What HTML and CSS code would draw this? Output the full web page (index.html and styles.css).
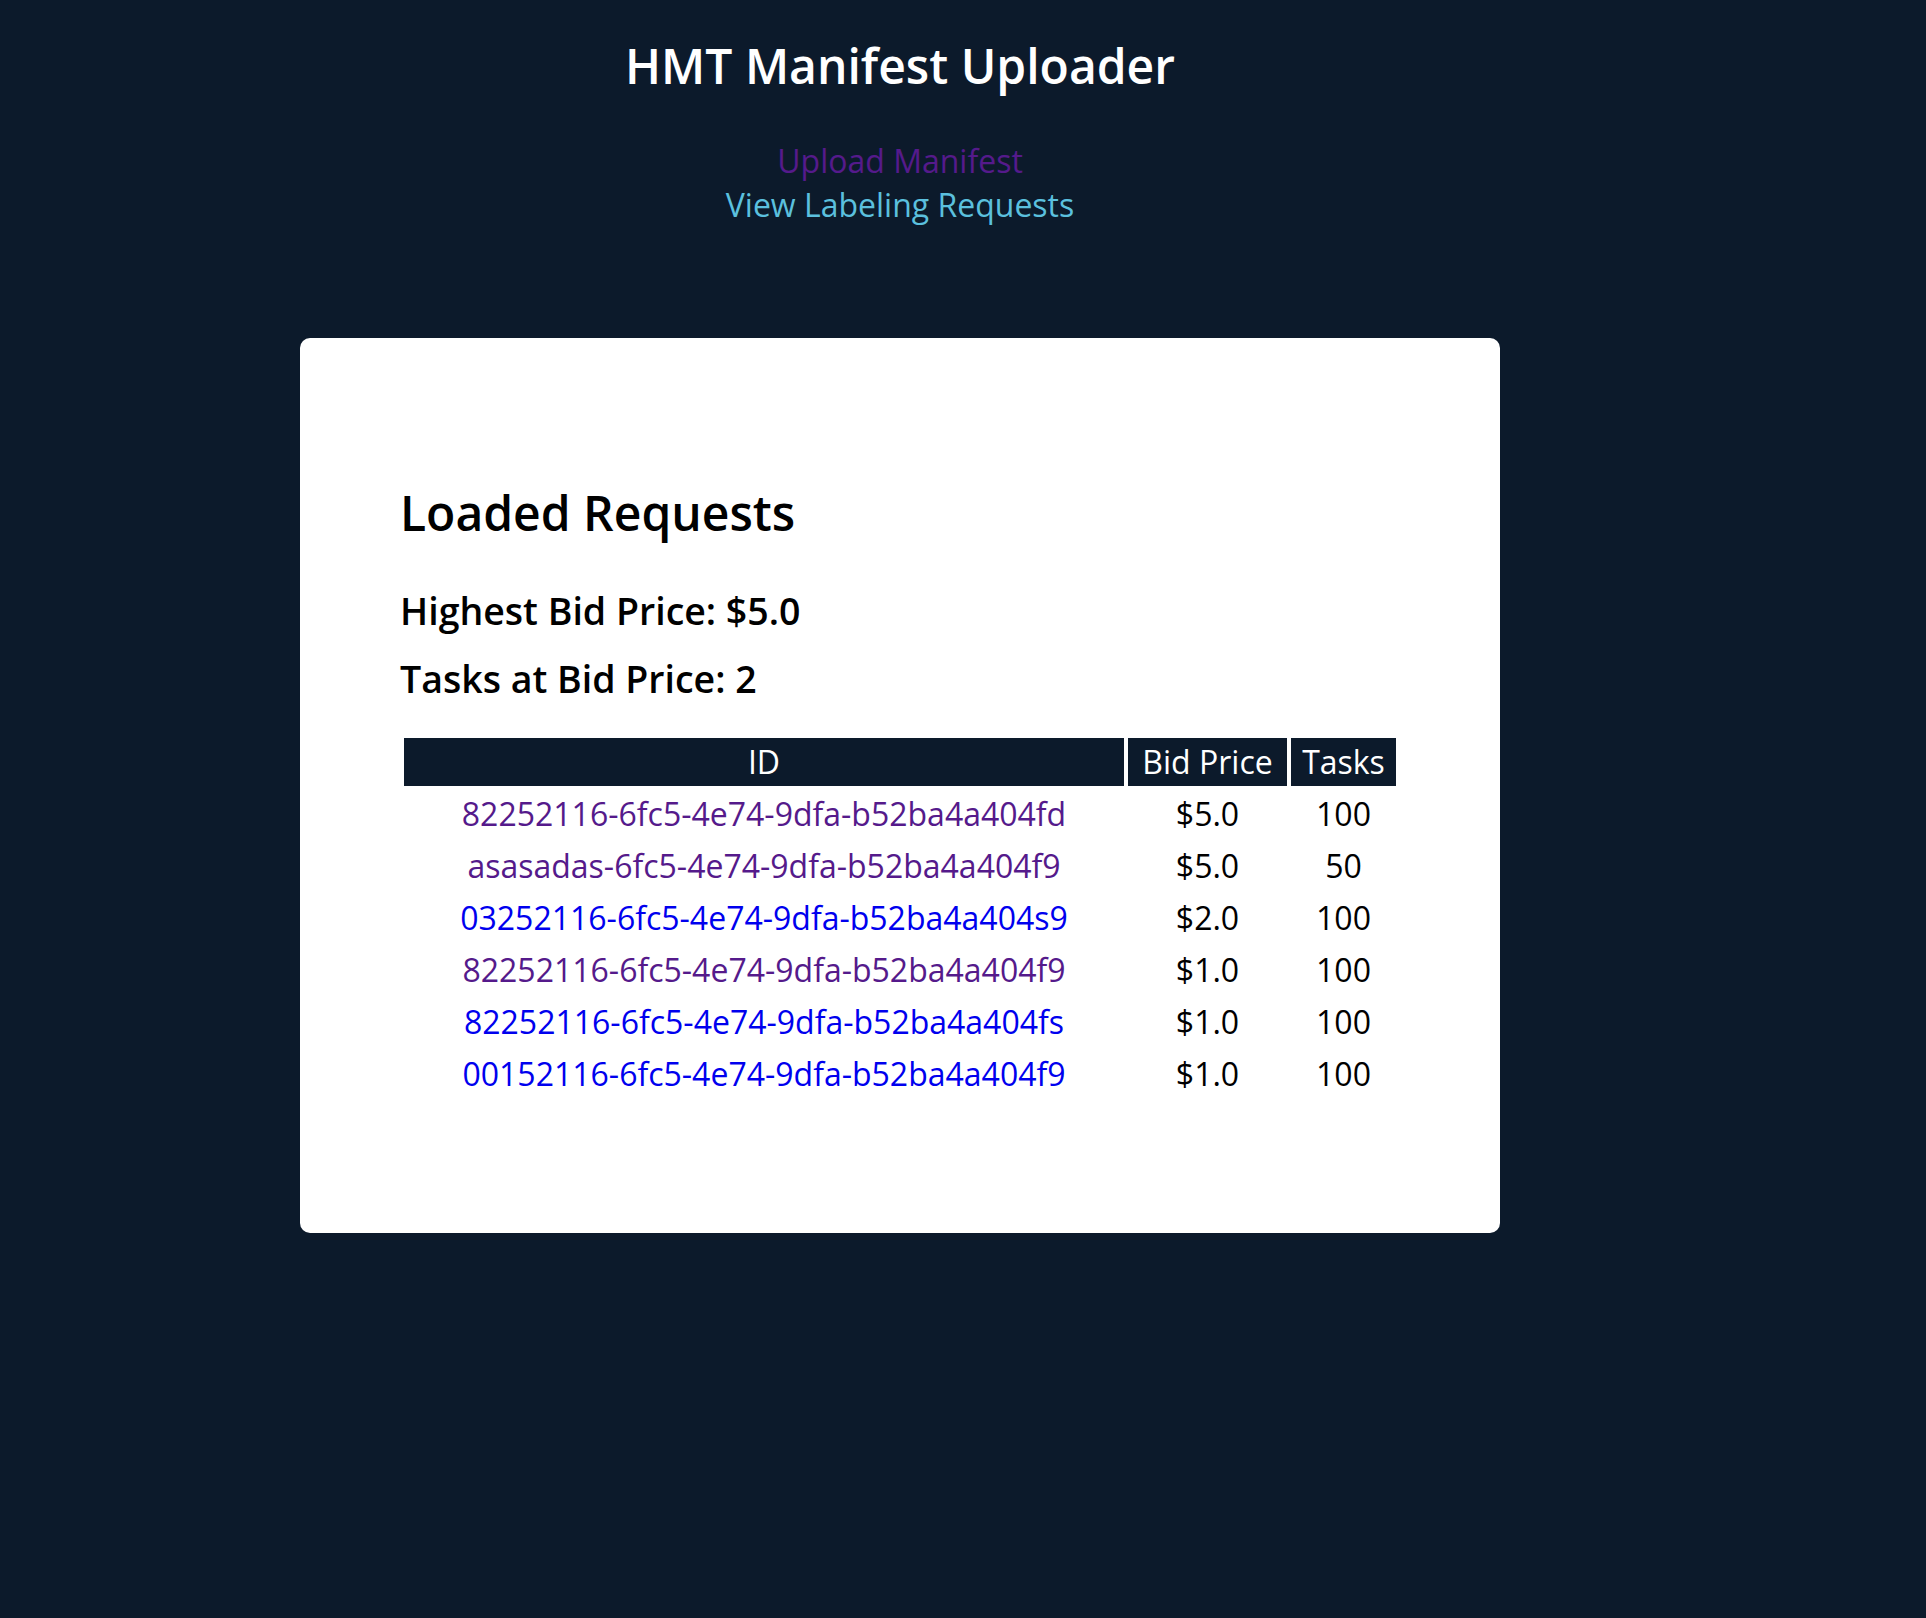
FILE: index.html
```html
<!DOCTYPE html>
<html lang="en">
<head>
    <meta charset="UTF-8">
    <meta name="viewport" content="width=device-width, initial-scale=1.0">
    <title>HMT Manifest Uploader</title>
    <link rel="stylesheet" href="styles.css">
</head>
<body>

    <div class="container">
        <h1 class="title">HMT Manifest Uploader</h1>

        <nav class="nav">
            <a href="#upload" class="nav-link visited">Upload Manifest</a>
            <a href="#requests" class="nav-link info">View Labeling Requests</a>
        </nav>

        <div class="card">
            <h2>Loaded Requests</h2>
            <h3>Highest Bid Price: $5.0</h3>
            <h3 class="second">Tasks at Bid Price: 2</h3>

            <table class="requests">
                <thead>
                    <tr>
                        <th>ID</th>
                        <th class="col-price">Bid Price</th>
                        <th class="col-tasks">Tasks</th>
                    </tr>
                </thead>
                <tbody>
                    <tr>
                        <td><a href="#" class="visited">82252116-6fc5-4e74-9dfa-b52ba4a404fd</a></td>
                        <td>$5.0</td>
                        <td>100</td>
                    </tr>
                    <tr>
                        <td><a href="#" class="visited">asasadas-6fc5-4e74-9dfa-b52ba4a404f9</a></td>
                        <td>$5.0</td>
                        <td>50</td>
                    </tr>
                    <tr>
                        <td><a href="#">03252116-6fc5-4e74-9dfa-b52ba4a404s9</a></td>
                        <td>$2.0</td>
                        <td>100</td>
                    </tr>
                    <tr>
                        <td><a href="#" class="visited">82252116-6fc5-4e74-9dfa-b52ba4a404f9</a></td>
                        <td>$1.0</td>
                        <td>100</td>
                    </tr>
                    <tr>
                        <td><a href="#">82252116-6fc5-4e74-9dfa-b52ba4a404fs</a></td>
                        <td>$1.0</td>
                        <td>100</td>
                    </tr>
                    <tr>
                        <td><a href="#">00152116-6fc5-4e74-9dfa-b52ba4a404f9</a></td>
                        <td>$1.0</td>
                        <td>100</td>
                    </tr>
                </tbody>
            </table>
        </div>
    </div>

</body>
</html>
```

FILE: styles.css
```css
body {
    background-color: #0c1a2b;
    font-family: 'Open Sans', 'Noto Sans', Arial, sans-serif;
    font-size: 32px;
    line-height: 44px;
    color: #000;
    margin: 0;
}

.container {
    width: 1200px;
    margin-left: 300px;
    text-align: center;
}

.title {
    color: #fff;
    font-size: 48px;
    font-weight: 600;
    line-height: 64px;
    margin: 34px 0 0;
}

.nav {
    margin-top: 41px;
}

.nav-link {
    display: block;
    text-decoration: none;
}

a {
    color: #0000ee;
    text-decoration: none;
}

a.visited {
    color: #551a8b;
}

a.info {
    color: #5bc0de;
}

.card {
    margin-top: 111px;
    background-color: #fff;
    border-radius: 10px;
    padding: 100px 100px 100px;
    text-align: left;
}

.card h2 {
    font-size: 48px;
    font-weight: 600;
    line-height: 65px;
    margin: 42px 0 40px;
}

.card h3 {
    font-size: 37.5px;
    font-weight: 600;
    line-height: 51px;
    margin: 0;
}

.card h3.second {
    margin-top: 17px;
}

.requests {
    width: 100%;
    border-spacing: 4px;
    margin: 30px 0 31px;
    text-align: center;
}

.requests th {
    background-color: #0c1a2b;
    color: #fff;
    font-weight: 400;
    padding: 2px 0;
}

.requests td {
    padding: 2px 0;
}

.col-price {
    width: 159px;
}

.col-tasks {
    width: 105px;
}
```
